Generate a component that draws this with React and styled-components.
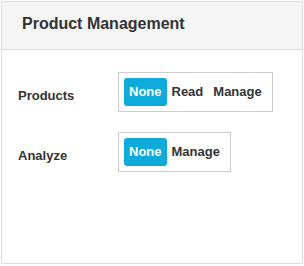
import React, { useState } from 'react';
import styled, { createGlobalStyle } from 'styled-components';

const GlobalStyle = createGlobalStyle`
  html, body {
    margin: 0;
    padding: 0;
    background: #fff;
  }
  body {
    font-family: "Liberation Sans", Arial, sans-serif;
    color: #333;
  }
`;

const Page = styled.div`
  padding: 1px;
`;

const Card = styled.div`
  width: 302px;
  height: 263px;
  box-sizing: border-box;
  border: 1px solid #ddd;
  background: #fff;
  display: flex;
  flex-direction: column;
`;

const CardHeader = styled.div`
  background: #f5f5f5;
  border-bottom: 1px solid #ddd;
  padding: 13px 20px 16px;
`;

const Title = styled.h3`
  margin: 0;
  font-size: 16px;
  line-height: 18px;
  font-weight: bold;
  color: #333;
`;

const CardBody = styled.div`
  padding: 22px 16px;
  display: flex;
  flex-direction: column;
  gap: 20px;
`;

const Row = styled.div`
  display: flex;
  align-items: center;
`;

const Label = styled.div`
  width: 100px;
  font-size: 13px;
  font-weight: bold;
  color: #333;
  padding-top: 6px;
`;

const ToggleGroup = styled.div`
  display: flex;
  border: 1px solid #ccc;
  padding: 5px;
`;

const Toggle = styled.button`
  border: none;
  margin: 0;
  height: 28px;
  padding: 0 5px;
  border-radius: 3px;
  font-family: "Liberation Sans", Arial, sans-serif;
  font-size: 13px;
  font-weight: bold;
  line-height: 28px;
  cursor: pointer;
  background: ${({ active }) => (active ? '#0eaad9' : 'transparent')};
  color: ${({ active }) => (active ? '#fff' : '#333')};
`;

const permissions = [
  { name: 'Products', options: ['None', 'Read', 'Manage'] },
  { name: 'Analyze', options: ['None', 'Manage'] },
];

const PermissionRow = ({ name, options }) => {
  const [value, setValue] = useState('None');
  return (
    <Row>
      <Label>{name}</Label>
      <ToggleGroup>
        {options.map((opt) => (
          <Toggle key={opt} active={value === opt} onClick={() => setValue(opt)}>
            {opt}
          </Toggle>
        ))}
      </ToggleGroup>
    </Row>
  );
};

const App = () => (
  <Page>
    <GlobalStyle />
    <Card>
      <CardHeader>
        <Title>Product Management</Title>
      </CardHeader>
      <CardBody>
        {permissions.map((p) => (
          <PermissionRow key={p.name} name={p.name} options={p.options} />
        ))}
      </CardBody>
    </Card>
  </Page>
);

export default App;
